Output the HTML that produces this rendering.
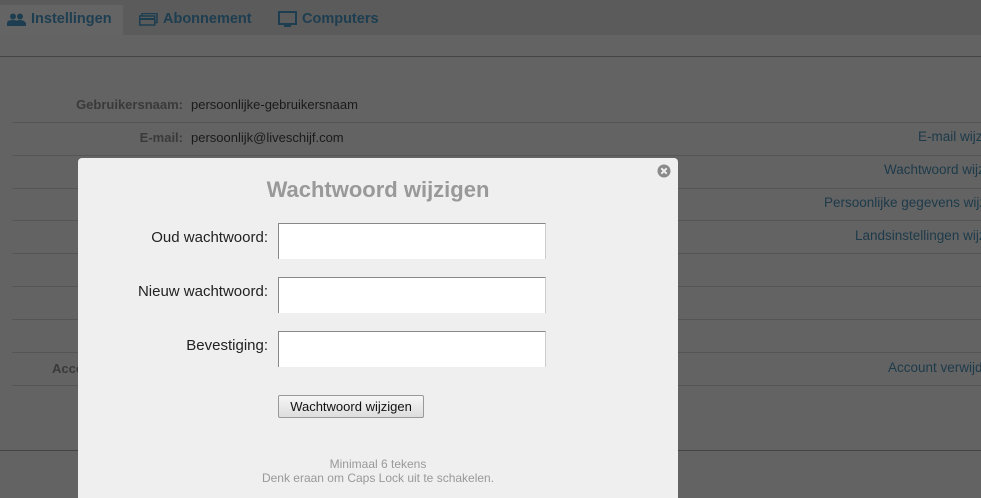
<html><head><style>
body{margin:0;width:981px;height:494px;overflow:hidden;background:#636363;font-family:"Liberation Sans",sans-serif;position:relative}
.tabs{position:absolute;left:0;top:0;width:981px;height:35px;background:#5b5b5b}
.tab{position:absolute;top:5px;height:30px;font-weight:bold;font-size:14.5px;color:#1d3e51;line-height:28px}
.hr{position:absolute;left:0;width:981px;height:1px;background:#444}
.row{position:absolute;left:12px;width:969px;height:1px;background:#555}
.lab{position:absolute;right:798px;font-weight:bold;font-size:13px;color:#3a3a3a}
.val{position:absolute;left:191px;font-size:13px;color:#1a1a1a}
.lnk{position:absolute;left:auto;font-size:13.5px;color:#1d3a4a;white-space:nowrap}
.modal{position:absolute;left:78px;top:158px;width:600px;height:340px;background:#efefef;border-radius:4px 4px 0 0}
.ml{position:absolute;right:410px;font-size:15px;color:#222;text-align:right}
.in{position:absolute;left:200px;width:266px;height:35px;background:#fff;border-top:1px solid #888;border-left:1px solid #888;border-right:1px solid #ccc}
</style></head><body>
<div class="tabs">
<div class="tab" style="left:0;width:123px;background:#646464;padding-left:0"><svg style="position:absolute;left:7px;top:8px" width="20" height="13" viewBox="0 0 20 13"><circle cx="6" cy="3.5" r="3" fill="#1d3e51"/><path d="M0 13v-3q0-3 6-3t6 3v3z" fill="#1d3e51"/><circle cx="13" cy="3.5" r="3" fill="#1d3e51"/><path d="M9 13v-3q0-3 4-3t6 3v3z" fill="#1d3e51"/></svg><span style="position:absolute;left:31px">Instellingen</span></div>
<div class="tab" style="left:139px"><svg style="position:absolute;left:0;top:8px" width="19" height="13" viewBox="0 0 19 13"><rect x="3" y="0.5" width="15" height="9" fill="none" stroke="#1d3e51" stroke-width="1.5"/><rect x="0.75" y="3" width="15" height="9" fill="#5b5b5b" stroke="#1d3e51" stroke-width="1.5"/><rect x="1" y="5" width="14" height="2" fill="#1d3e51"/></svg><span style="position:absolute;left:24px;white-space:nowrap">Abonnement</span></div>
<div class="tab" style="left:278px"><svg style="position:absolute;left:0;top:6px" width="19" height="17" viewBox="0 0 19 17"><rect x="1" y="1" width="17" height="12" fill="none" stroke="#1d3e51" stroke-width="2"/><rect x="6" y="14" width="7" height="2" fill="#1d3e51"/></svg><span style="position:absolute;left:24px;white-space:nowrap">Computers</span></div>
</div>
<div class="hr" style="top:56px"></div>
<div class="lab" style="top:97px">Gebruikersnaam:</div><div class="val" style="top:97px">persoonlijke-gebruikersnaam</div>
<div class="row" style="top:122px"></div>
<div class="lab" style="top:130px">E-mail:</div><div class="val" style="top:130px">persoonlijk@liveschijf.com</div><div class="lnk" style="top:129px;left:918px">E-mail wijzigen</div>
<div class="row" style="top:155px"></div>
<div class="lnk" style="top:162px;left:884px">Wachtwoord wijzigen</div>
<div class="row" style="top:188px"></div>
<div class="lnk" style="top:195px;left:824px">Persoonlijke gegevens wijzigen</div>
<div class="row" style="top:220px"></div>
<div class="lnk" style="top:228px;left:855px">Landsinstellingen wijzigen</div>
<div class="row" style="top:253px"></div>
<div class="row" style="top:286px"></div>
<div class="row" style="top:319px"></div>
<div class="row" style="top:352px"></div>
<div class="lab" style="top:361px;right:auto;left:52px">Account verwijderen</div>
<div class="lnk" style="top:360px;left:888px">Account verwijderen</div>
<div class="row" style="top:385px"></div>
<div class="hr" style="top:450px"></div>
<div class="modal">
<svg style="position:absolute;left:579px;top:6px" width="14" height="14" viewBox="0 0 14 14"><circle cx="7" cy="7" r="6.5" fill="#8a8a8a"/><path d="M4.3 4.3l5.4 5.4M9.7 4.3l-5.4 5.4" stroke="#efefef" stroke-width="2"/></svg>
<div style="position:absolute;left:0;width:600px;top:19px;text-align:center;font-size:22px;font-weight:bold;color:#999">Wachtwoord wijzigen</div>
<div class="ml" style="top:71px">Oud wachtwoord:</div><div class="in" style="top:65px"></div>
<div class="ml" style="top:125px">Nieuw wachtwoord:</div><div class="in" style="top:119px"></div>
<div class="ml" style="top:179px">Bevestiging:</div><div class="in" style="top:173px"></div>
<div style="position:absolute;left:200px;top:237px;width:144px;height:21px;border:1px solid #999;border-radius:2px;background:linear-gradient(#f6f6f6,#ddd);font-size:13px;color:#111;text-align:center;line-height:21px">Wachtwoord wijzigen</div>
<div style="position:absolute;left:100px;width:400px;top:299px;text-align:center;font-size:12px;color:#999;line-height:14px">Minimaal 6 tekens<br>Denk eraan om Caps Lock uit te schakelen.</div>
</div>
</body></html>
